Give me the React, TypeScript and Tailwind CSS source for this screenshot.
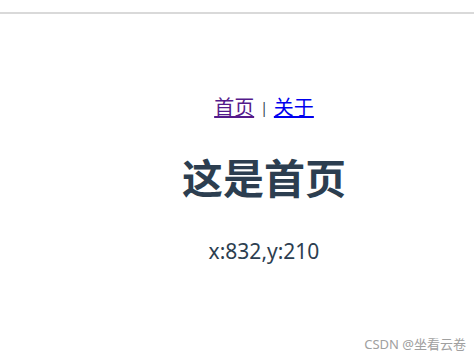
export default function App() {
  return (
    <div className="relative h-[358px] w-[474px] overflow-hidden bg-white font-['Noto_Sans','Noto_Sans_CJK_SC',sans-serif] text-[#2c3e50]">
      <div className="pt-[12px]">
        <div className="h-[2px] w-full bg-[#d9d9d9]" />
      </div>
      <div className="flex flex-col items-center pl-[54px] pt-[80px] text-center">
        <nav className="flex items-center gap-[6px] text-[20px] leading-[28px]">
          <a href="#" className="text-[#551a8b] underline">首页</a>
          <span className="text-[14px] text-[#2c3e50]">|</span>
          <a href="#" className="text-[#0000ee] underline">关于</a>
        </nav>
        <h1 className="mt-[30px] text-[41px] font-bold leading-[52px]">这是首页</h1>
        <p className="mt-[32px] text-[21px] leading-[30px]">x:832,y:210</p>
      </div>
      <div className="absolute bottom-[4px] right-[8px] text-[13px] text-[#a0a0a0]">CSDN @坐看云卷</div>
    </div>
  );
}
